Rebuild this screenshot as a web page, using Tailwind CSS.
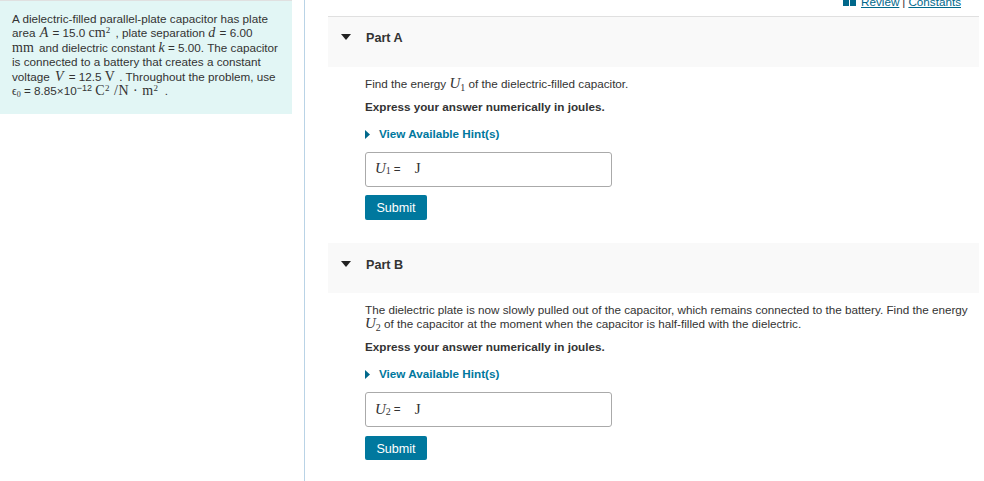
<!DOCTYPE html>
<html lang="en">

<head>
    <meta charset="UTF-8">
    <title>Capacitor problem</title>
    <script src="https://cdn.jsdelivr.net/npm/@tailwindcss/browser@4"></script>
</head>

<body class="w-[984px] h-[481px] overflow-hidden bg-white flex font-['Liberation_Sans',sans-serif] text-[11.7px] text-[#333]">

    <!-- problem statement -->
    <div class="w-[304px] shrink-0">
        <div class="w-[292px] h-[114px] border-t border-[#e0e0e0] bg-[#e2f6f5] pl-[12px] pr-[4px] pt-[11px] leading-[14.45px]">
            A dielectric-filled parallel-plate capacitor has plate<br>
            area <i class="font-['Liberation_Serif',serif] text-[14px] leading-[0] mx-[1px]">A</i> = 15.0 <span class="font-['Liberation_Serif',serif] text-[14px] leading-[0]">cm<sup class="text-[9px] leading-[0]">2</sup></span><span class="ml-[2px]"> , plate separation </span><i class="font-['Liberation_Serif',serif] text-[14px] leading-[0] mr-[1px]">d</i> = 6.00<br>
            <span class="font-['Liberation_Serif',serif] text-[14px] leading-[0] mr-[2px]">mm</span> and dielectric constant <i class="font-['Liberation_Serif',serif] text-[14px] leading-[0]">k</i> = 5.00. The capacitor<br>
            is connected to a battery that creates a constant<br>
            voltage <i class="font-['Liberation_Serif',serif] text-[14px] leading-[0] mx-[2px]">V</i> = 12.5 <span class="font-['Liberation_Serif',serif] text-[14px] leading-[0] mr-[1px]">V</span> . Throughout the problem, use<br>
            <span class="font-['Liberation_Serif',serif] leading-[0]">ϵ<sub class="text-[8px] leading-[0]">0</sub></span> = 8.85×10<sup class="text-[9px] leading-[0]">−12</sup> <span class="font-['Liberation_Serif',serif] text-[14px] leading-[0] tracking-[0.5px]">C<sup class="text-[9px] leading-[0]">2</sup> /N · m<sup class="text-[9px] leading-[0]">2</sup></span><span class="ml-[3px]"> .</span>
        </div>
    </div>

    <!-- parts -->
    <div class="w-[675px] border-l border-[#b9d3e6] pl-[23px]">
        <div class="h-[16px] border-b border-[#e0e0e0] box-content overflow-hidden flex justify-end items-start pr-[18px] text-[#00688b]">
            <div class="flex items-center leading-[14px] -mt-[5px]">
                <svg class="w-[13px] h-[8px] mr-[5px]" viewBox="0 0 13 8"><path fill="#00688b" d="M0 0h6v8H0zM7 0h6v8H7z"/></svg>
                <span class="underline">Review</span><span class="mx-[3px] text-[#333]">|</span><span class="underline">Constants</span>
            </div>
        </div>

        <!-- part A -->
        <div class="h-[50px] bg-[#f9f9f9] flex items-start pt-[15px] font-bold text-[12.6px]">
            <svg class="w-[10px] h-[6px] ml-[13px] mt-[2px] mr-[15px]" viewBox="0 0 10 6"><path fill="#222" d="M0 0h10L5 6z"/></svg>
            <span class="leading-[13px]">Part A</span>
        </div>
        <div class="pl-[37px] pt-[10px]">
            <p class="leading-[14px]">Find the energy <i class="font-['Liberation_Serif',serif] text-[15px] leading-[0]">U</i><sub class="font-['Liberation_Serif',serif] text-[10px] leading-[0]">1</sub> of the dielectric-filled capacitor.</p>
            <p class="mt-[9px] leading-[14px] font-bold">Express your answer numerically in joules.</p>
            <div class="mt-[13px] flex items-center font-bold text-[#00789e] leading-[14px]">
                <svg class="w-[5px] h-[9px] mr-[9px]" viewBox="0 0 5 9"><path fill="#00688b" d="M0 0l5 4.5-5 4.5z"/></svg>
                <span>View Available Hint(s)</span>
            </div>
            <div class="mt-[11px] w-[247px] h-[35px] border border-[#aaa] rounded-[3px] flex items-center pl-[9px] pb-[2px] font-['Liberation_Serif',serif] text-[15px]">
                <i>U</i><sub class="text-[10px] leading-[0]">1</sub><span class="ml-[3px] font-['Liberation_Sans',sans-serif] text-[11.7px]">=</span><span class="ml-[14px]">J</span>
            </div>
            <button class="block mt-[8px] w-[62px] h-[25px] pt-[1px] bg-[#00789e] rounded-[2px] text-white text-[12.6px] text-center">Submit</button>
        </div>

        <!-- part B -->
        <div class="h-[50px] bg-[#f9f9f9] flex items-start pt-[16px] mt-[23px] font-bold text-[12.6px]">
            <svg class="w-[10px] h-[6px] ml-[13px] mt-[2px] mr-[15px]" viewBox="0 0 10 6"><path fill="#222" d="M0 0h10L5 6z"/></svg>
            <span class="leading-[13px]">Part B</span>
        </div>
        <div class="pl-[37px] pt-[10px]">
            <p class="leading-[14px]">The dielectric plate is now slowly pulled out of the capacitor, which remains connected to the battery. Find the energy<br><i class="font-['Liberation_Serif',serif] text-[15px] leading-[0]">U</i><sub class="font-['Liberation_Serif',serif] text-[10px] leading-[0]">2</sub> of the capacitor at the moment when the capacitor is half-filled with the dielectric.</p>
            <p class="mt-[9px] leading-[14px] font-bold">Express your answer numerically in joules.</p>
            <div class="mt-[13px] flex items-center font-bold text-[#00789e] leading-[14px]">
                <svg class="w-[5px] h-[9px] mr-[9px]" viewBox="0 0 5 9"><path fill="#00688b" d="M0 0l5 4.5-5 4.5z"/></svg>
                <span>View Available Hint(s)</span>
            </div>
            <div class="mt-[11px] w-[247px] h-[35px] border border-[#aaa] rounded-[3px] flex items-center pl-[9px] pb-[1px] font-['Liberation_Serif',serif] text-[15px]">
                <i>U</i><sub class="text-[10px] leading-[0]">2</sub><span class="ml-[3px] font-['Liberation_Sans',sans-serif] text-[11.7px]">=</span><span class="ml-[14px]">J</span>
            </div>
            <button class="block mt-[9px] w-[62px] h-[24px] pt-[2px] bg-[#00789e] rounded-[2px] text-white text-[12.6px] text-center">Submit</button>
        </div>
    </div>

</body>

</html>
